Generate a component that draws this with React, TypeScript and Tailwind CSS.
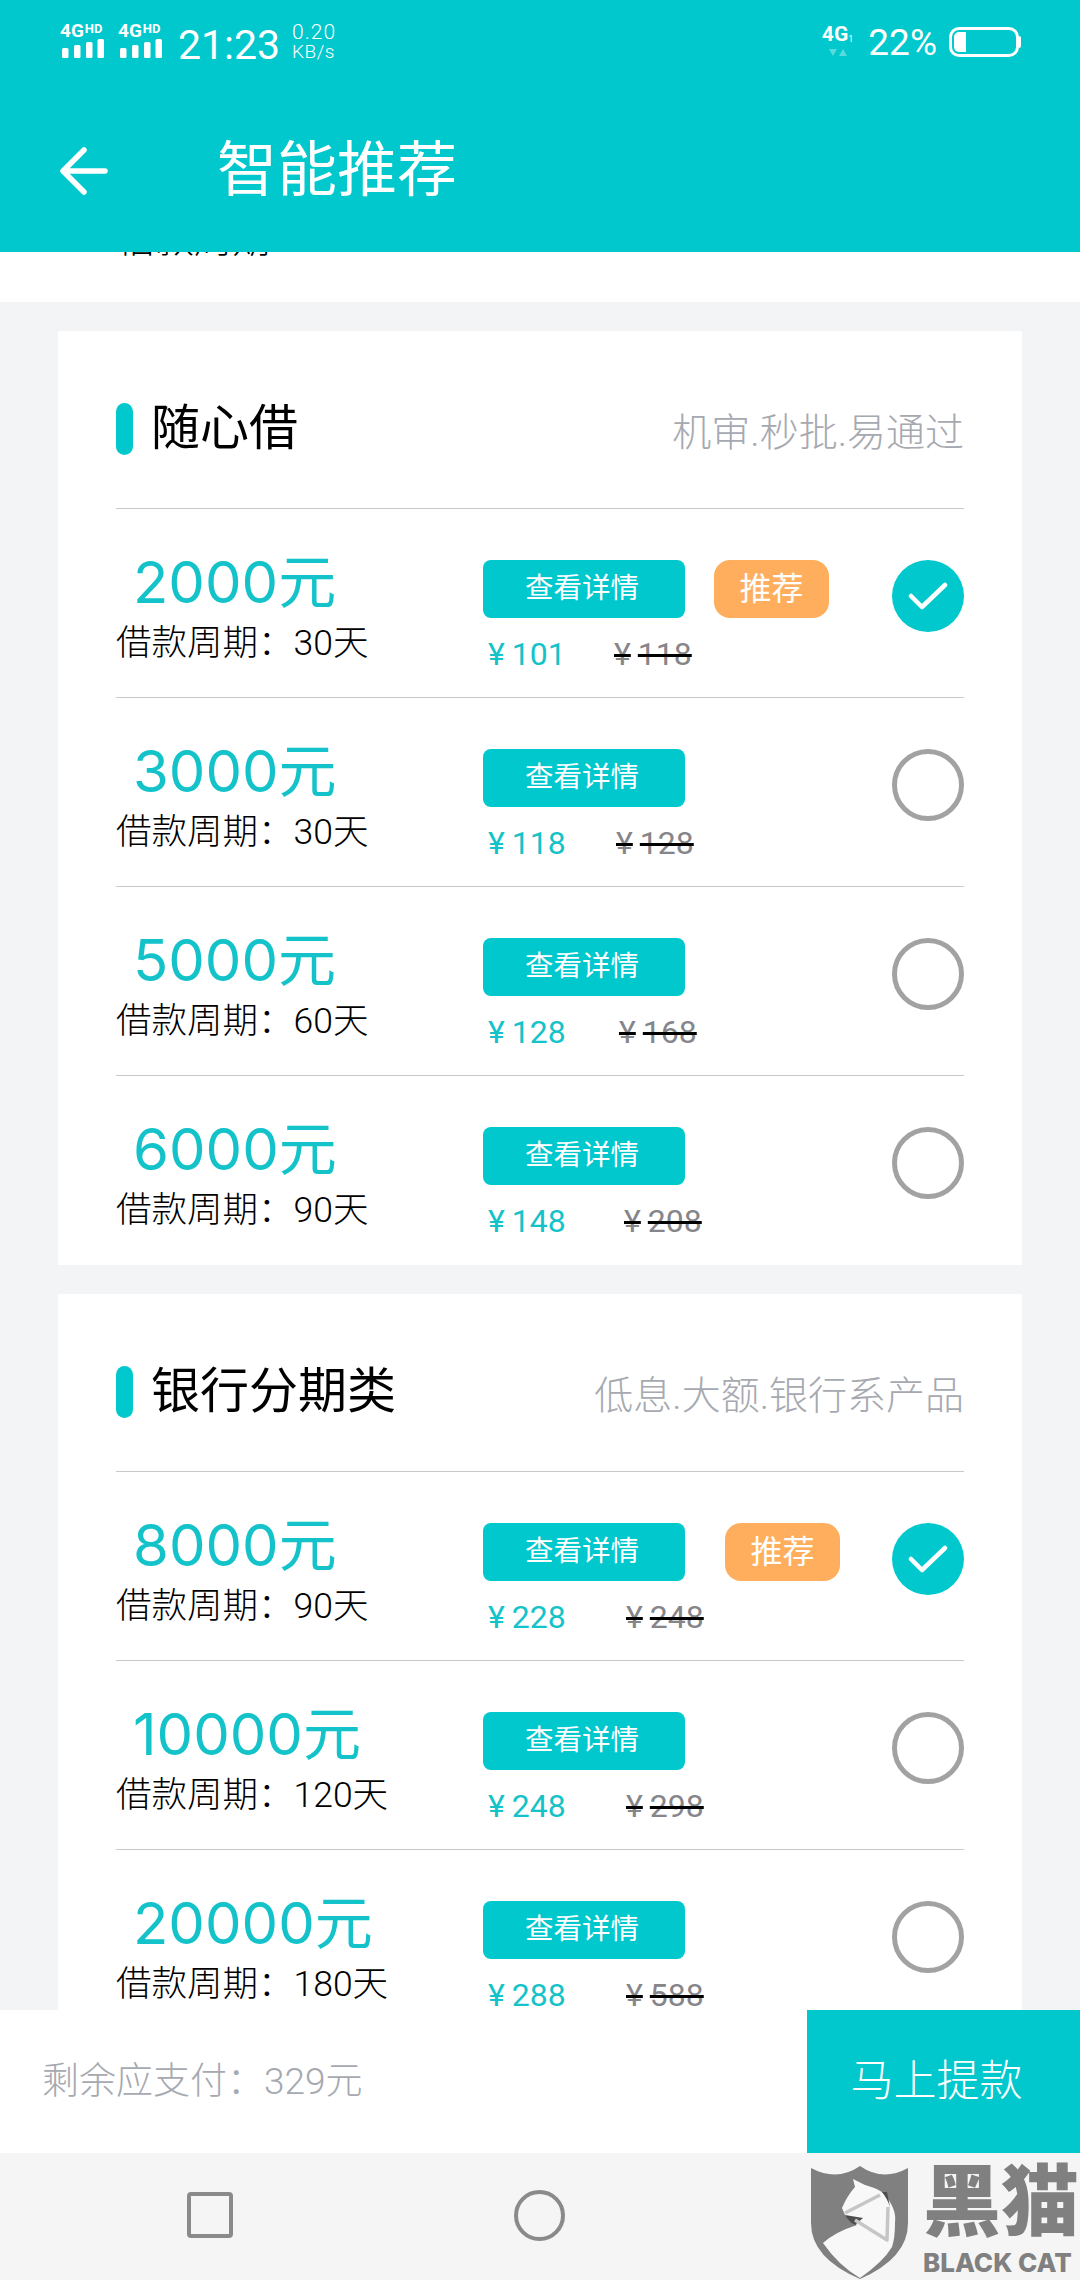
const rowsA = [
  { amount: "2000元", term: "借款周期：30天", price: "101", old: "118", priceW: "w-[126px]", tag: "ml-[29px]", checked: true },
  { amount: "3000元", term: "借款周期：30天", price: "118", old: "128", priceW: "w-[128px]", tag: "", checked: false },
  { amount: "5000元", term: "借款周期：60天", price: "128", old: "168", priceW: "w-[131px]", tag: "", checked: false },
  { amount: "6000元", term: "借款周期：90天", price: "148", old: "208", priceW: "w-[136px]", tag: "", checked: false },
];

const rowsB = [
  { amount: "8000元", term: "借款周期：90天", price: "228", old: "248", priceW: "w-[138px]", tag: "ml-[40px]", checked: true },
  { amount: "10000元", term: "借款周期：120天", price: "248", old: "298", priceW: "w-[138px]", tag: "", checked: false },
  { amount: "20000元", term: "借款周期：180天", price: "288", old: "588", priceW: "w-[138px]", tag: "", checked: false },
];

type Row = (typeof rowsA)[number];

function SignalBars() {
  return (
    <svg width="46" height="21" viewBox="0 0 46 21" fill="white" className="block">
      <rect x="2" y="10" width="6.5" height="10" rx="1.5" />
      <rect x="14" y="7" width="6.5" height="13" rx="1.5" />
      <rect x="26" y="4" width="6.5" height="16" rx="1.5" />
      <rect x="37.5" y="1" width="6.5" height="19" rx="1.5" />
    </svg>
  );
}

function SimSignal() {
  return (
    <div className="flex flex-col w-[48px]">
      <div className="flex items-start h-[15px] font-bold text-white font-['Roboto']">
        <span className="text-[19px] leading-[15px]">4G</span>
        <span className="text-[13px] leading-[11px] ml-[1px]">HD</span>
      </div>
      <SignalBars />
    </div>
  );
}

function StatusBar() {
  return (
    <div className="h-[88px] flex justify-between pl-[60px] pr-[59px] pt-[23px] text-white font-['Roboto'] shrink-0">
      <div className="flex items-start">
        <SimSignal />
        <div className="ml-[10px]">
          <SimSignal />
        </div>
        <span className="ml-[12px] text-[41px] leading-[40px] mt-[2px]">21:23</span>
        <div className="ml-[12px] flex flex-col text-[21px] leading-[20px] font-light -mt-[1px] tracking-[1px]">
          <span>0.20</span>
          <span className="text-[19px] tracking-[0.5px]">KB/s</span>
        </div>
      </div>
      <div className="flex items-start">
        <div className="flex flex-col items-center mr-[15px] mt-[1px]">
          <div className="flex items-end">
            <span className="text-[21px] leading-[21px] font-bold">4G</span>
            <span className="text-[9px] leading-[12px]">1</span>
          </div>
          <svg width="20" height="9" viewBox="0 0 20 9" fill="white" opacity="0.35" className="mt-[3px]">
            <path d="M1 1h8L5 8zM11 8h8l-4-7z" />
          </svg>
        </div>
        <span className="text-[37px] leading-[35px] mt-[2px]">22%</span>
        <div className="ml-[12px] mt-[4px] flex items-center">
          <div className="w-[70px] h-[30px] border-[3px] border-white rounded-[10px] p-[2px]">
            <div className="w-[12px] h-full bg-white rounded-l-[5px]" />
          </div>
          <div className="w-[2px] h-[12px] bg-white rounded-r-sm" />
        </div>
      </div>
    </div>
  );
}

function Header() {
  return (
    <header className="h-[252px] bg-[#00c8cd] flex flex-col shrink-0 relative z-10">
      <StatusBar />
      <div className="flex-1 flex items-center pl-[60px] pt-[1px]">
        <svg width="48" height="48" viewBox="0 0 48 48" fill="none" stroke="white" strokeWidth="5.5" strokeLinecap="round" strokeLinejoin="round">
          <path d="M24 3L3 24l21 21M4 24h41" />
        </svg>
        <h1 className="ml-[109px] text-[60px] leading-[70px] text-white">智能推荐</h1>
      </div>
    </header>
  );
}

function Radio({ checked }: { checked: boolean }) {
  if (checked) {
    return (
      <div className="w-[72px] h-[72px] rounded-full bg-[#00c8cd] flex items-center justify-center shrink-0">
        <svg width="40" height="30" viewBox="0 0 40 30" fill="none" stroke="white" strokeWidth="4.5" strokeLinecap="round" strokeLinejoin="round">
          <path d="M3 15l11 11L37 4" />
        </svg>
      </div>
    );
  }
  return <div className="w-[72px] h-[72px] rounded-full border-[5px] border-[#a2a2a2] shrink-0" />;
}

function LoanRow({ row }: { row: Row }) {
  return (
    <div className="h-[189px] flex border-b border-[#c8c8c8] last:border-b-0">
      <div className="w-[367px] shrink-0 pt-[42px]">
        <div className="pl-[17px] text-[58px] leading-[62px] text-[#14c3c9] font-['Inter','Noto_Sans_CJK_SC',sans-serif]">{row.amount}</div>
        <div className="mt-[8px] text-[35.5px] leading-[44px] font-light text-black">{row.term}</div>
      </div>
      <div className="flex-1 pt-[51px]">
        <div className="flex items-start">
          <div className="w-[202px] h-[58px] pr-[4px] rounded-[8px] bg-[#00c8cd] text-white text-[28.5px] leading-[58px] text-center">查看详情</div>
          {row.tag && (
            <div className={`${row.tag} w-[115px] h-[58px] rounded-[16px] bg-[#ffae5d] text-white text-[32px] leading-[58px] text-center`}>推荐</div>
          )}
        </div>
        <div className="flex mt-[16px] pl-[5px] text-[32px] leading-[40px]">
          <span className={`${row.priceW} text-[#14c3c9]`}>
            <span className="mr-[7px]">¥</span>
            {row.price}
          </span>
          <span className="text-[#85858a] line-through decoration-black decoration-[3px]">
            <span className="mr-[7px]">¥</span>
            {row.old}
          </span>
        </div>
      </div>
      <div className="pt-[51px]">
        <Radio checked={row.checked} />
      </div>
    </div>
  );
}

function Card({ title, note, rows }: { title: string; note: string; rows: Row[] }) {
  return (
    <section className="bg-white mx-[58px] px-[58px]">
      <div className="h-[178px] pt-[18px] flex items-center justify-between border-b border-[#c8c8c8]">
        <div className="flex items-center">
          <span className="w-[17px] h-[52px] rounded-full bg-[#00c8cd]" />
          <h2 className="ml-[18px] text-[49px] leading-[60px] font-normal text-black">{title}</h2>
        </div>
        <span className="text-[39px] leading-[50px] mt-[8px] font-light text-[#a6a9b0]">{note}</span>
      </div>
      {rows.map((r) => (
        <LoanRow key={r.amount} row={r} />
      ))}
    </section>
  );
}

function CatMark() {
  return (
    <svg width="98" height="114" viewBox="0 0 98 114" className="block">
      <path d="M0 2Q26 16 49 0Q72 16 97 2V57Q97 92 49 113Q0 92 0 57Z" fill="#808080" />
      <path d="M42 13L54 19Q66 22 72 27Q86 42 84 57Q84 72 81 81Q72 96 49 112Q28 100 12 77Q24 66 46 59L34 49L31 42Q36 30 44 21Z" fill="#f8f8f8" />
      <path d="M71 26L76 26L79 41Q76 32 71 26ZM34 49L52 52L44 59Q38 56 34 49Z" fill="#4e4e4e" />
      <path d="M34 47L69 29M44 54L76 74L77 41" fill="none" stroke="#c6c6c6" strokeWidth="3.5" strokeLinejoin="round" />
    </svg>
  );
}

export default function App() {
  return (
    <div className="w-[1080px] h-[2280px] flex flex-col overflow-hidden bg-[#f2f4f6] font-['Roboto','Noto_Sans_CJK_SC',sans-serif]">
      <Header />
      <main className="flex-1 min-h-0 overflow-hidden">
        <div className="h-[50px] bg-white overflow-hidden">
          <div className="pl-[118px] -mt-[35px] text-[38px] leading-[44px] font-light text-black">借款周期</div>
        </div>
        <div className="pt-[29px] flex flex-col gap-[29px]">
          <Card title="随心借" note="机审.秒批.易通过" rows={rowsA} />
          <Card title="银行分期类" note="低息.大额.银行系产品" rows={rowsB} />
        </div>
      </main>
      <div className="h-[143px] bg-white flex shrink-0">
        <div className="flex-1 pl-[42px] flex items-center text-[37px] font-light text-[#a6a9b0]">剩余应支付：329元</div>
        <div className="w-[273px] bg-[#00c8cd] text-white text-[43px] font-light flex items-center justify-center pr-[14px]">马上提款</div>
      </div>
      <nav className="h-[127px] bg-[#f5f5f5] shrink-0 relative flex items-center pl-[187px]">
        <div className="w-[46px] h-[46px] border-[4px] border-[#8a8a8a] rounded-[4px] -mt-[3px]" />
        <div className="ml-[281px] w-[51px] h-[51px] border-[4px] border-[#8a8a8a] rounded-full -mt-[3px]" />
        <div className="absolute left-[811px] top-[13px] flex">
          <CatMark />
          <div className="ml-[14px] flex flex-col w-[158px]">
            <span className="text-[78px] leading-[76px] font-black text-[#808080] whitespace-nowrap">黑猫</span>
            <span className="text-[26px] leading-[28px] font-extrabold text-[#808080] font-['Inter'] mt-[7px] whitespace-nowrap">BLACK CAT</span>
          </div>
        </div>
      </nav>
    </div>
  );
}
